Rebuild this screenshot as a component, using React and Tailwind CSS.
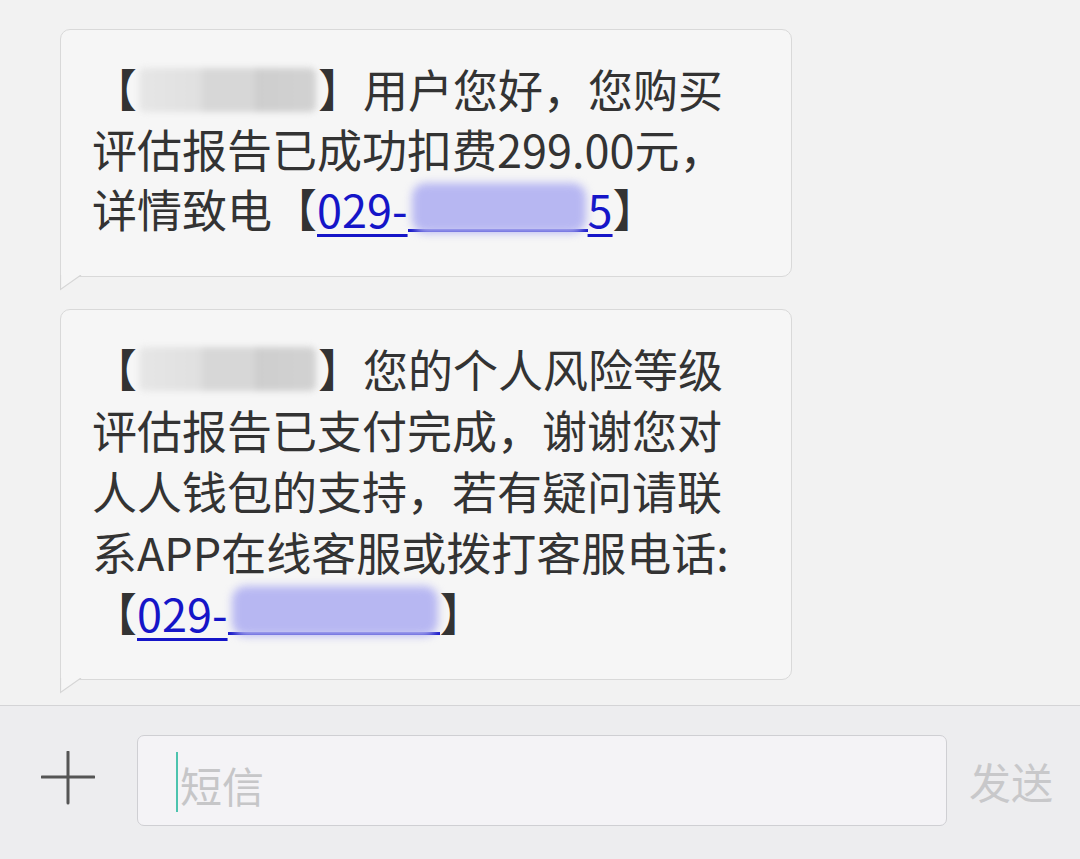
import React from "react";

const FONT = { fontFamily: '"Noto Sans CJK SC", "Noto Sans", sans-serif' };

function NameBlur({ w }) {
  return (
    <span className="relative inline-block align-top h-[60px]" style={{ width: w }}>
      <span className="absolute left-[2px] right-[2px] top-[9px] h-[44px] rounded-[6px] blur-[3px] bg-[linear-gradient(90deg,#e6e6e6_0%,#e0e0e0_35%,#d7d7d7_36%,#d7d7d7_65%,#cecece_66%,#d2d2d2_100%)]" />
    </span>
  );
}

function PhoneBlur({ w }) {
  return (
    <span className="relative inline-block align-top h-[60px]" style={{ width: w }}>
      <span className="absolute left-0 right-0 bottom-[7px] h-[3px] bg-[#1515c8]" />
      <span className="absolute left-[4px] right-[2px] top-[4px] h-[50px] rounded-[14px] blur-[4px] bg-[#b7b7f2]" />
    </span>
  );
}

function Tail() {
  return (
    <svg
      className="absolute left-[-1px] top-full -mt-[1px]"
      width="24"
      height="16"
      viewBox="0 0 24 16"
    >
      <path d="M0.5 0 L0.5 14.5 L21 0 Z" fill="#f6f6f6" />
      <path d="M0.5 0 L0.5 14.5 L21 0" fill="none" stroke="#d6d6d6" strokeWidth="1.2" />
    </svg>
  );
}

function Bubble({ children, lead }) {
  return (
    <div
      className={
        "relative w-[732px] rounded-[10px] rounded-bl-none border border-[#d9d9d9] bg-[#f6f6f6] pl-[31px] " +
        (lead === 60 ? "pt-[29px] pb-[37px]" : "pt-[28px] pb-[36px]")
      }
    >
      <div
        className={
          "text-[45px] text-[#333333] whitespace-nowrap " +
          (lead === 60 ? "leading-[60px]" : "leading-[61px]")
        }
      >
        {children}
      </div>
      <Tail />
    </div>
  );
}

const LINK = "text-[#1515c8] underline decoration-[3px] underline-offset-[6px]";

export default function App() {
  return (
    <div className="w-[1080px] h-[859px] overflow-hidden bg-[#f2f2f2] flex flex-col" style={FONT}>
      <div className="h-[705px] flex flex-col gap-[32px] pt-[29px] pl-[60px]">
        <Bubble lead={60}>
          <div>
            【<NameBlur w="181px" />】用户您好，您购买
          </div>
          <div>评估报告已成功扣费299.00元，</div>
          <div>
            详情致电【<span className={LINK}>029-</span>
            <PhoneBlur w="180px" />
            <span className={LINK}>5</span>】
          </div>
        </Bubble>
        <Bubble lead={61}>
          <div>
            【<NameBlur w="181px" />】您的个人风险等级
          </div>
          <div>评估报告已支付完成，谢谢您对</div>
          <div>人人钱包的支持，若有疑问请联</div>
          <div>系APP在线客服或拨打客服电话:</div>
          <div>
            【<span className={LINK}>029-</span>
            <PhoneBlur w="212px" />】
          </div>
        </Bubble>
      </div>
      <div className="flex-1 border-t border-[#d4d4d6] bg-[#ededef] flex items-start pt-[29px]">
        <div className="ml-[41px] mt-[16px] w-[54px] h-[54px] flex items-center justify-center">
          <svg width="54" height="54" viewBox="0 0 54 54">
            <path d="M1 26 H53" stroke="#555555" strokeWidth="3" strokeLinecap="round" />
            <path d="M27 1 V52" stroke="#555555" strokeWidth="3" strokeLinecap="round" />
          </svg>
        </div>
        <div className="ml-[42px] w-[810px] h-[91px] rounded-[7px] border border-[#cfcfd3] bg-[#f4f3f6] flex items-center relative">
          <span className="absolute left-[38px] top-[16px] w-[2px] h-[60px] bg-[#4cc3ae]" />
          <span className="ml-[42px] mt-[8px] text-[42px] leading-[50px] text-[#c6c6c8]">短信</span>
        </div>
        <div className="ml-[22px] h-[91px] flex items-center text-[42px] leading-[50px] text-[#c8c8ca]">
          发送
        </div>
      </div>
    </div>
  );
}
